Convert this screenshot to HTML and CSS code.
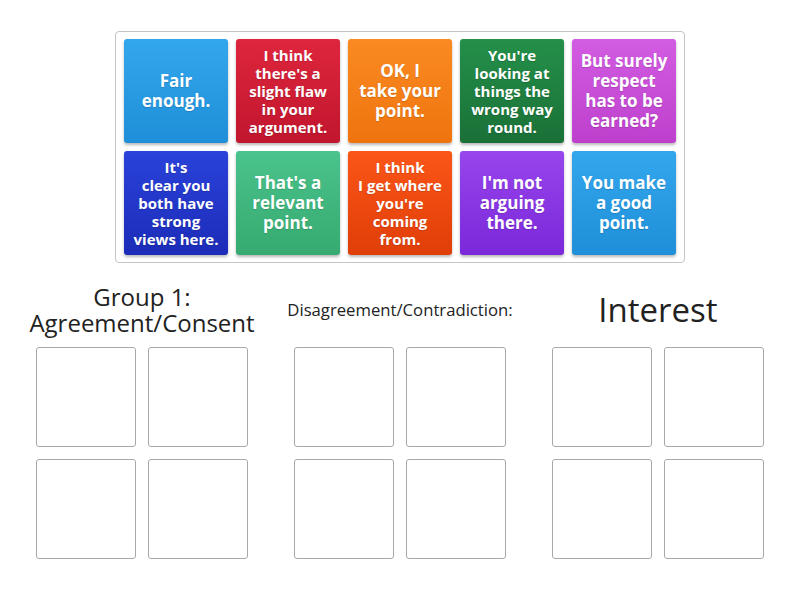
FILE: index.html
```html
<!DOCTYPE html>
<html>
<head>
<meta charset="utf-8">
<link rel="stylesheet" href="styles.css">
</head>
<body>
<div class="bank">
  <div class="tile c-blue big"><span>Fair<br>enough.</span></div>
  <div class="tile c-red"><span>I think<br>there's a<br>slight flaw<br>in your<br>argument.</span></div>
  <div class="tile c-orange big"><span>OK, I<br>take your<br>point.</span></div>
  <div class="tile c-green"><span>You're<br>looking at<br>things the<br>wrong way<br>round.</span></div>
  <div class="tile c-magenta big"><span>But surely<br>respect<br>has to be<br>earned?</span></div>
  <div class="tile c-navy"><span>It's<br>clear you<br>both have<br>strong<br>views here.</span></div>
  <div class="tile c-mint big"><span>That's a<br>relevant<br>point.</span></div>
  <div class="tile c-flame"><span>I think<br>I get where<br>you're<br>coming<br>from.</span></div>
  <div class="tile c-purple big"><span>I'm not<br>arguing<br>there.</span></div>
  <div class="tile c-blue big"><span>You make<br>a good<br>point.</span></div>
</div>

<div class="groups">
  <div class="group">
    <div class="group-title t-medium">Group 1:<br>Agreement/Consent</div>
    <div class="slots">
      <div class="slot"></div><div class="slot"></div>
      <div class="slot"></div><div class="slot"></div>
    </div>
  </div>
  <div class="group">
    <div class="group-title t-small">Disagreement/Contradiction:</div>
    <div class="slots">
      <div class="slot"></div><div class="slot"></div>
      <div class="slot"></div><div class="slot"></div>
    </div>
  </div>
  <div class="group">
    <div class="group-title t-large">Interest</div>
    <div class="slots">
      <div class="slot"></div><div class="slot"></div>
      <div class="slot"></div><div class="slot"></div>
    </div>
  </div>
</div>
</body>
</html>
```

FILE: styles.css
```css
html, body {
  margin: 0;
  padding: 0;
  background: #ffffff;
  font-family: "Open Sans", "Liberation Sans", sans-serif;
}

.bank {
  box-sizing: border-box;
  width: 570px;
  margin: 31px 0 0 115px;
  padding: 7px 8px 7px 8px;
  border: 1px solid #c4c4c4;
  border-radius: 4px;
  display: grid;
  grid-template-columns: repeat(5, 104px);
  grid-auto-rows: 104px;
  gap: 8px;
}

.tile {
  border-radius: 3px;
  display: flex;
  align-items: center;
  justify-content: center;
  text-align: center;
  color: #ffffff;
  font-weight: 700;
  font-size: 15px;
  line-height: 18px;
  box-shadow: 0 2px 3px rgba(0, 0, 0, 0.28);
  text-shadow: 0 1px 1px rgba(0, 0, 0, 0.15);
}

.tile.big {
  font-size: 17px;
  line-height: 20px;
}

.c-blue    { background: linear-gradient(#33a7ee, #1e8fd8); }
.c-red     { background: linear-gradient(#de263d, #c0162e); }
.c-orange  { background: linear-gradient(#fb8a22, #ee740e); }
.c-green   { background: linear-gradient(#24904a, #1a7037); }
.c-magenta { background: linear-gradient(#d25ce2, #bd40cc); }
.c-navy    { background: linear-gradient(#2a42da, #1c2cb8); }
.c-mint    { background: linear-gradient(#4ac38c, #36aa70); }
.c-flame   { background: linear-gradient(#fb5618, #e03e08); }
.c-purple  { background: linear-gradient(#9845ec, #7a28da); }

.groups {
  display: grid;
  grid-template-columns: repeat(3, 258px);
  justify-content: center;
  margin-top: 17px;
}

.group {
  display: flex;
  flex-direction: column;
  align-items: center;
}

.group-title {
  height: 60px;
  display: flex;
  align-items: center;
  justify-content: center;
  text-align: center;
  white-space: nowrap;
  color: #222222;
  margin-bottom: 7px;
}

.t-medium {
  font-size: 24px;
  line-height: 26px;
}

.t-small {
  font-size: 16.7px;
  line-height: 22px;
}

.t-large {
  font-size: 33px;
  line-height: 42px;
}

.slots {
  display: grid;
  grid-template-columns: repeat(2, 100px);
  grid-auto-rows: 100px;
  gap: 12px;
}

.slot {
  box-sizing: border-box;
  border: 1px solid #a8a8a8;
  border-radius: 3px;
}
```
